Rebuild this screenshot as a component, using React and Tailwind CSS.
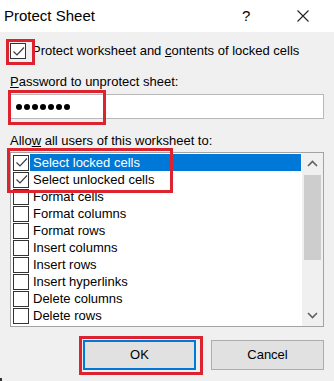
import React from 'react';

const rows = [
  { label: 'Select locked cells', checked: true, selected: true },
  { label: 'Select unlocked cells', checked: true },
  { label: 'Format cells' },
  { label: 'Format columns' },
  { label: 'Format rows' },
  { label: 'Insert columns' },
  { label: 'Insert rows' },
  { label: 'Insert hyperlinks' },
  { label: 'Delete columns' },
  { label: 'Delete rows' },
];

const Tick = () => (
  <svg width="13" height="11" viewBox="0 0 13 11">
    <polyline points="1.5,5.5 5,9 12,1.5" fill="none" stroke="#3c3c3c" strokeWidth="1.2" />
  </svg>
);

const Box = ({ checked, className = '' }) => (
  <div className={`flex items-center justify-center w-[16px] h-[16px] border border-[#333] bg-white ${className}`}>
    {checked && <Tick />}
  </div>
);

const Chevron = ({ up }) => (
  <svg width="11" height="7" viewBox="0 0 11 7">
    <polyline
      points={up ? '1,6 5.5,1.5 10,6' : '1,1 5.5,5.5 10,1'}
      fill="none"
      stroke="#606060"
      strokeWidth="1.6"
    />
  </svg>
);

export default function App() {
  return (
    <div className="relative w-[334px] h-[381px] overflow-hidden bg-[#f0f0f0] text-black font-['Liberation_Sans',Arial,sans-serif] text-[13px] leading-[16px]">
      {/* title bar */}
      <div className="flex items-center h-[32px] bg-white">
        <span className="pl-[4px] text-[15px] leading-[18px]">Protect Sheet</span>
        <span className="ml-auto w-[8px] text-[15px] leading-[18px]">?</span>
        <svg className="ml-[47px] mr-[25px]" width="12" height="12" viewBox="0 0 12 12">
          <path d="M0.5 0.5 L11.5 11.5 M11.5 0.5 L0.5 11.5" stroke="#222" strokeWidth="1.1" />
        </svg>
      </div>

      <div className="pl-[10px] pr-[10px]">
        {/* protect checkbox */}
        <div className="flex items-center gap-[6px] mt-[11px] h-[16px]">
          <Box checked />
          <span>
            Protect worksheet and <u>c</u>ontents of locked cells
          </span>
        </div>

        <div className="mt-[15px] h-[16px]">
          <u>P</u>assword to unprotect sheet:
        </div>

        <div className="mt-[4px] h-[25px] bg-white border border-[#b9b9b9] flex items-center gap-[2px] pl-[5px]">
          {Array.from({ length: 7 }).map((_, i) => (
            <div key={i} className="w-[6px] h-[6px] rounded-full bg-black" />
          ))}
        </div>

        <div className="mt-[14px] h-[16px]">
          Allo<u>w</u> all users of this worksheet to:
        </div>

        {/* list */}
        <div className="mt-[3px] h-[175px] bg-white border border-[#a3a3a3] flex">
          <div className="flex-1 pt-[1px] pl-[2px]">
            {rows.map((r) => (
              <div key={r.label} className="flex items-center h-[17px]">
                <Box checked={r.checked} />
                <div
                  className={`flex-1 h-[17px] flex items-center pl-[3px] ml-[1px] ${
                    r.selected ? 'bg-[#0078d7] text-white' : ''
                  }`}
                >
                  {r.label}
                </div>
              </div>
            ))}
          </div>
          <div className="w-[21px] ml-[1px] bg-[#f0f0f0] flex flex-col items-center">
            <div className="h-[20px] flex items-center justify-center">
              <Chevron up />
            </div>
            <div className="mt-[2px] w-[17px] h-[85px] bg-[#cdcdcd]" />
            <div className="mt-auto h-[22px] flex items-center justify-center">
              <Chevron />
            </div>
          </div>
        </div>

        {/* buttons */}
        <div className="flex justify-end gap-[15px] mt-[13px] pr-[0px]">
          <button className="w-[113px] h-[30px] bg-[#e1e1e1] border-2 border-[#0078d7]">OK</button>
          <button className="w-[113px] h-[30px] bg-[#e1e1e1] border border-[#adadad]">Cancel</button>
        </div>
      </div>

      {/* red annotation boxes */}
      <div className="absolute left-[6px] top-[39px] w-[29px] h-[26px] border-[3px] border-[#de2330]" />
      <div className="absolute left-[8px] top-[90px] w-[98px] h-[35px] border-[3px] border-[#de2330]" />
      <div className="absolute left-[7px] top-[148px] w-[166px] h-[45px] border-[3px] border-[#de2330]" />
      <div className="absolute left-[79px] top-[336px] w-[124px] h-[39px] border-[3px] border-[#de2330]" />
      <div className="absolute left-0 top-[378px] w-[2px] h-[3px] bg-[#333]" />
    </div>
  );
}
